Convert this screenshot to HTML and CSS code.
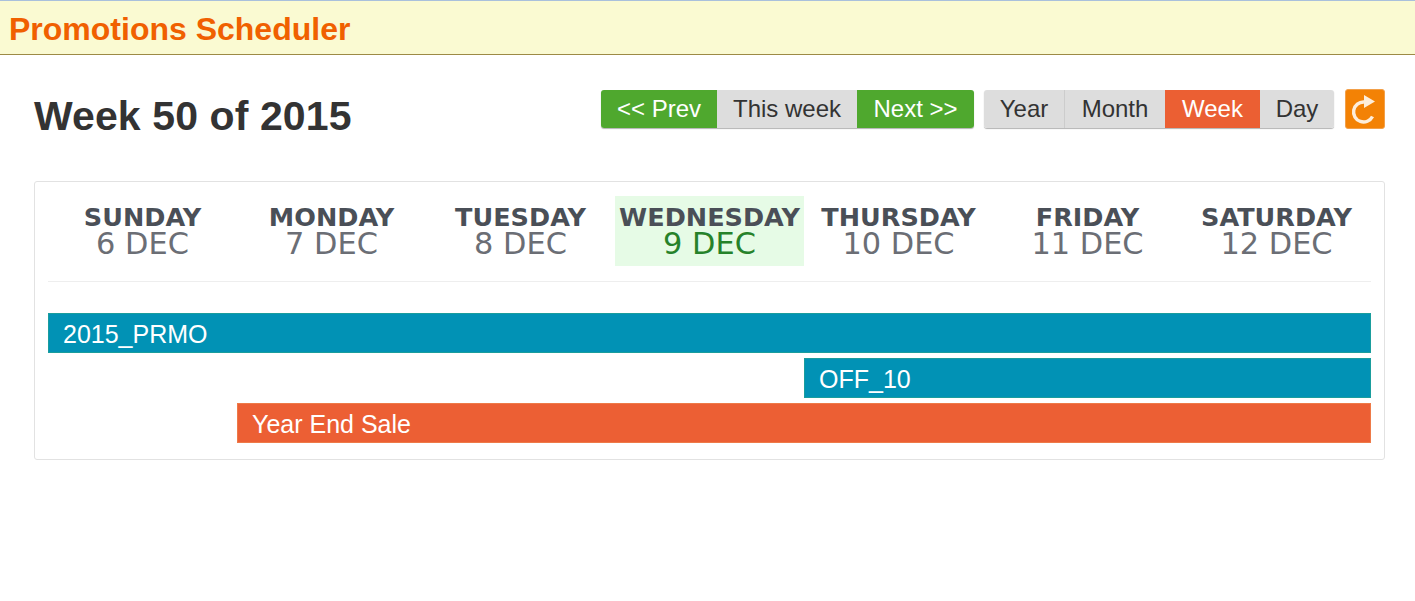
FILE: index.html
```html
<!DOCTYPE html>
<html lang="en">
<head>
  <meta charset="UTF-8">
  <title>Promotions Scheduler</title>
  <link rel="stylesheet" href="styles.css">
</head>
<body>

  <header class="app-header">Promotions Scheduler</header>

  <div class="content">
    <!-- Toolbar -->
    <div class="toolbar">
      <h1 class="week-title">Week 50 of 2015</h1>
      <div class="controls">
        <div class="btn-group">
          <button class="btn btn-green btn-prev">&lt;&lt; Prev</button>
          <button class="btn btn-this">This week</button>
          <button class="btn btn-green btn-next">Next &gt;&gt;</button>
        </div>
        <div class="btn-group">
          <button class="btn btn-year">Year</button>
          <button class="btn btn-month">Month</button>
          <button class="btn btn-orange btn-week">Week</button>
          <button class="btn btn-day">Day</button>
        </div>
        <button class="refresh-btn" aria-label="Refresh">
          <svg width="36" height="36" viewBox="0 0 36 36">
            <path d="M17 11A10 10 0 1 0 25.5 25.5" fill="none" stroke="#fdeedb" stroke-width="3.4"/>
            <path d="M17 4L28 10.5L17 17Z" fill="#fdeedb"/>
          </svg>
        </button>
      </div>
    </div>

    <!-- Calendar -->
    <div class="calendar">
      <div class="week-head">
        <div class="day"><b>SUNDAY</b><span>6 DEC</span></div>
        <div class="day"><b>MONDAY</b><span>7 DEC</span></div>
        <div class="day"><b>TUESDAY</b><span>8 DEC</span></div>
        <div class="day today"><b>WEDNESDAY</b><span>9 DEC</span></div>
        <div class="day"><b>THURSDAY</b><span>10 DEC</span></div>
        <div class="day"><b>FRIDAY</b><span>11 DEC</span></div>
        <div class="day"><b>SATURDAY</b><span>12 DEC</span></div>
      </div>
      <div class="events">
        <div class="event event-blue span-all">2015_PRMO</div>
        <div class="event event-blue span-off">OFF_10</div>
        <div class="event event-orange span-sale">Year End Sale</div>
      </div>
    </div>
  </div>

</body>
</html>
```

FILE: styles.css
```css
body {
  font-family: "Liberation Sans", Arial, sans-serif;
  margin: 0;
  background-color: white;
  color: #333;
}

.app-header {
  height: 53px;
  line-height: 56px;
  padding-left: 9px;
  background-color: #fafad2;
  border-top: 1px solid #a9c0dc;
  border-bottom: 1px solid #9c8a45;
  color: #f06000;
  font-size: 32px;
  font-weight: bold;
}

.content {
  padding: 34px 30px 0 34px;
}

.toolbar {
  display: flex;
  justify-content: space-between;
  align-items: flex-start;
  height: 92px;
}

.week-title {
  margin: 0;
  font-size: 41px;
  line-height: 54px;
  letter-spacing: 0.1px;
  color: #333;
}

.controls {
  display: flex;
  align-items: flex-start;
  gap: 10px;
}

.btn-group {
  display: flex;
  margin-top: 1px;
  border-radius: 3px;
  overflow: hidden;
  box-shadow: 0 1px 1px rgba(0, 0, 0, 0.3);
}

.btn-group + .refresh-btn {
  margin-left: 1px;
}

.btn {
  height: 38px;
  padding: 0;
  border: none;
  background-color: #ddd;
  color: #333;
  font-family: inherit;
  font-size: 24px;
}

.btn-prev { width: 116px; }
.btn-this { width: 140px; }
.btn-next { width: 117px; }
.btn-month { width: 100px; }
.btn-week { width: 95px; }
.btn-day { width: 74px; }

.btn-year {
  width: 81px;
  border-right: 1px solid #ccc;
}

.btn-green {
  background-color: #4fa82e;
  color: white;
}

.btn-orange {
  background-color: #eb5f33;
  color: white;
}

.refresh-btn {
  display: flex;
  align-items: center;
  justify-content: center;
  width: 40px;
  height: 40px;
  padding: 0;
  border: 1px solid #f2a04a;
  border-radius: 3px;
  background-color: #f38205;
}

.calendar {
  height: 263px;
  padding: 14px 13px 0;
  border: 1px solid #e2e2e2;
  border-radius: 3px;
}

.week-head {
  display: grid;
  grid-template-columns: repeat(7, 1fr);
  padding-bottom: 15px;
  border-bottom: 1px solid #eee;
}

.day {
  height: 70px;
  text-align: center;
  font-family: "DejaVu Sans", Verdana, sans-serif;
  color: #6b6e75;
}

.day b {
  display: block;
  padding-top: 8px;
  font-size: 25.5px;
  line-height: 27px;
  color: #4a4f57;
}

.day span {
  display: block;
  font-size: 30.4px;
  line-height: 26px;
}

.today {
  background-color: #e6fbe6;
}

.today span {
  color: #26822a;
}

.events {
  display: grid;
  grid-template-columns: repeat(7, 1fr);
  row-gap: 5px;
  margin-top: 31px;
}

.event {
  height: 40px;
  box-sizing: border-box;
  padding-left: 14px;
  border: 1px solid;
  color: white;
  font-size: 25px;
  line-height: 41px;
}

.event-blue {
  background-color: #0192b5;
  border-color: #1a9d9d;
}

.event-orange {
  background-color: #ec5f34;
  border-color: #ee7a48;
}

.span-all {
  grid-column: 1 / 8;
}

.span-off {
  grid-column: 5 / 8;
}

.span-sale {
  grid-column: 2 / 8;
}
```
